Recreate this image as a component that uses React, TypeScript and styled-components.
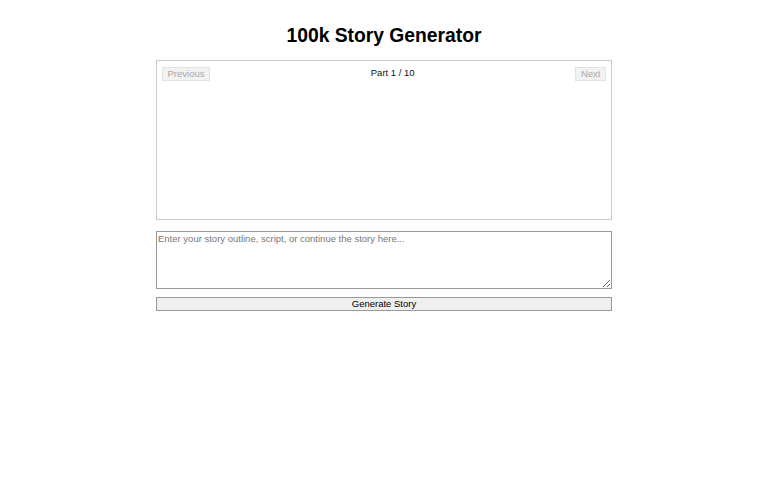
import React from "react";
import styled, { createGlobalStyle } from "styled-components";

const GlobalStyle = createGlobalStyle`
  html, body {
    margin: 0;
    padding: 0;
    background: #ffffff;
    font-family: "Liberation Sans", Arial, sans-serif;
    color: #000;
  }
`;

const Page = styled.main`
  width: 456px;
  margin: 0 auto;
  padding-top: 24px;
  display: flex;
  flex-direction: column;
`;

const Title = styled.h1`
  margin: 0 0 13px;
  font-size: 19.3px;
  line-height: 23px;
  font-weight: bold;
  text-align: center;
`;

const StoryBox = styled.section`
  box-sizing: border-box;
  height: 160px;
  border: 1px solid #cccccc;
  padding: 6px 5px 5px;
  display: flex;
  flex-direction: column;
`;

const Pager = styled.div`
  display: flex;
  justify-content: space-between;
  align-items: flex-start;
`;

const PageButton = styled.button`
  box-sizing: border-box;
  height: 14px;
  padding: 0 4.5px;
  margin: 0;
  font-family: "Liberation Sans", Arial, sans-serif;
  font-size: 9.5px;
  line-height: 12px;
  color: #a8a8a8;
  background: #f2f2f2;
  border: 1px solid #e2e2e2;
  border-radius: 0;
`;

const PartLabel = styled.span`
  font-size: 9.5px;
  line-height: 12px;
  color: #111;
`;

const Prompt = styled.textarea`
  box-sizing: border-box;
  margin: 11px 0 0;
  width: 100%;
  height: 58px;
  padding: 1px 1px;
  font-family: "Liberation Sans", Arial, sans-serif;
  font-size: 9.5px;
  border: 1px solid #9a9a9a;
  border-radius: 0;
  resize: vertical;
  &::placeholder {
    color: #777;
  }
`;

const GenerateButton = styled.button`
  box-sizing: border-box;
  margin-top: 8px;
  width: 100%;
  height: 14px;
  padding: 0;
  font-family: "Liberation Sans", Arial, sans-serif;
  font-size: 9.5px;
  line-height: 12px;
  color: #000;
  background: #efefef;
  border: 1px solid #9a9a9a;
  border-radius: 0;
`;

export default function App() {
  return (
    <>
      <GlobalStyle />
      <Page>
        <Title>100k Story Generator</Title>
        <StoryBox>
          <Pager>
            <PageButton disabled>Previous</PageButton>
            <PartLabel>Part 1 / 10</PartLabel>
            <PageButton disabled>Next</PageButton>
          </Pager>
        </StoryBox>
        <Prompt placeholder="Enter your story outline, script, or continue the story here..." />
        <GenerateButton>Generate Story</GenerateButton>
      </Page>
    </>
  );
}
